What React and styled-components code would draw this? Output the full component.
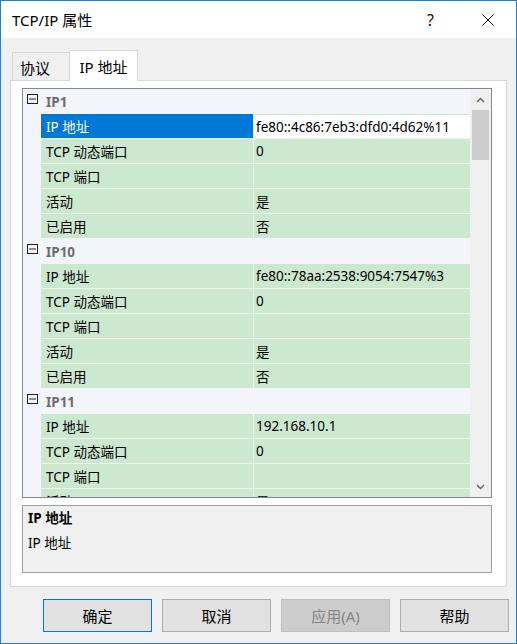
import React from "react";
import styled, { createGlobalStyle } from "styled-components";

const GlobalStyle = createGlobalStyle`
  html, body {
    margin: 0;
    padding: 0;
    background: #ffffff;
  }
  body {
    font-family: "Noto Sans", "Noto Sans CJK SC", sans-serif;
  }
  * {
    box-sizing: border-box;
  }
`;

// window frame
const Window = styled.div`
  width: 517px;
  height: 644px;
  border: 1px solid #1883d7;
  background: #f0f0f0;
  display: flex;
  flex-direction: column;
`;

const TitleBar = styled.div`
  height: 37px;
  background: #ffffff;
  display: flex;
  align-items: center;
  padding-left: 11px;
  font-size: 15px;
  color: #000;
`;

const Title = styled.div`
  flex: 1;
`;

const TitleButton = styled.div`
  width: 57px;
  height: 37px;
  display: flex;
  align-items: center;
  justify-content: center;
  font-size: 16px;
  color: #111;
`;

const TabStrip = styled.div`
  margin-top: 11px;
  height: 31px;
  display: flex;
  align-items: flex-end;
  padding-left: 11px;
`;

const Tab = styled.div`
  height: ${({ active }) => (active ? "31px" : "28px")};
  width: ${({ active }) => (active ? "68px" : "58px")};
  background: ${({ active }) => (active ? "#ffffff" : "#f0f0f0")};
  border: 1px solid #d9d9d9;
  border-bottom: none;
  border-left: ${({ active }) => (active ? "none" : "1px solid #d9d9d9")};
  margin-bottom: ${({ active }) => (active ? "-1px" : "0")};
  position: relative;
  z-index: ${({ active }) => (active ? 2 : 1)};
  display: flex;
  align-items: center;
  justify-content: ${({ active }) => (active ? "center" : "flex-start")};
  padding-left: ${({ active }) => (active ? "0" : "7px")};
  padding-top: ${({ active }) => (active ? "0" : "2px")};
  font-size: 15px;
  color: #000;
`;

const Panel = styled.div`
  margin-left: 9px;
  width: 497px;
  height: 507px;
  background: #ffffff;
  border: 1px solid #d9d9d9;
  padding: 7px 0 0 11px;
  display: flex;
  flex-direction: column;
`;

// property grid
const Grid = styled.div`
  width: 470px;
  height: 410px;
  border: 1px solid #828790;
  display: flex;
  overflow: hidden;
`;

const RowList = styled.div`
  flex: 1;
  overflow: hidden;
  font-size: 13.5px;
`;

const CategoryRow = styled.div`
  height: 25px;
  background: #f4f5fa;
  display: flex;
  align-items: center;
`;

const Gutter = styled.div`
  width: 18px;
  height: 100%;
  flex-shrink: 0;
  background: #f4f5fa;
  display: flex;
  align-items: flex-start;
  justify-content: center;
  padding-top: ${({ icon }) => (icon ? "5px" : "0")};
`;

const CategoryName = styled.div`
  padding-left: 5px;
  font-weight: bold;
  color: #6d6d6d;
  font-size: 13.5px;
`;

const PropRow = styled.div`
  height: 25px;
  display: flex;
`;

const NameCell = styled.div`
  width: 213px;
  flex-shrink: 0;
  background: ${({ selected }) => (selected ? "#0078d7" : "#cce8cf")};
  color: ${({ selected }) => (selected ? "#ffffff" : "#000")};
  border-right: 1px solid #eef7ef;
  border-bottom: 1px solid #eef7ef;
  padding-left: 5px;
  display: flex;
  align-items: center;
`;

const ValueCell = styled.div`
  flex: 1;
  background: ${({ selected }) => (selected ? "#ffffff" : "#cce8cf")};
  border-top: ${({ selected }) => (selected ? "1px solid #cce8cf" : "none")};
  border-bottom: 1px solid #eef7ef;
  padding-left: 2px;
  display: flex;
  align-items: center;
  color: #000;
  white-space: nowrap;
`;

const ScrollBar = styled.div`
  width: 21px;
  flex-shrink: 0;
  background: #f0f0f0;
  display: flex;
  flex-direction: column;
  align-items: center;
`;

const ArrowBox = styled.div`
  height: 21px;
  width: 100%;
  display: flex;
  align-items: center;
  justify-content: center;
`;

const Thumb = styled.div`
  width: 17px;
  height: 50px;
  background: #cdcdcd;
`;

const Track = styled.div`
  flex: 1;
`;

const Description = styled.div`
  margin-top: 7px;
  width: 470px;
  height: 68px;
  background: #f0f0f0;
  border: 1px solid #a0a0a0;
  padding: 0 5px;
  font-size: 13.5px;
  color: #000;
`;

const DescTitle = styled.div`
  font-weight: bold;
  line-height: 25px;
`;

const DescText = styled.div`
  line-height: 25px;
`;

const ButtonRow = styled.div`
  margin-top: 12px;
  display: flex;
  justify-content: flex-end;
  gap: 10px;
  padding-right: 7px;
`;

const Button = styled.div`
  width: 109px;
  height: 33px;
  display: flex;
  align-items: center;
  justify-content: center;
  font-size: 15px;
  background: ${({ disabled }) => (disabled ? "#cccccc" : "#e1e1e1")};
  color: ${({ disabled }) => (disabled ? "#838383" : "#000")};
  border: 1px solid
    ${({ primary, disabled }) =>
      primary ? "#0078d7" : disabled ? "#bfbfbf" : "#adadad"};
`;

const CollapseIcon = () => (
  <svg width="11" height="10" viewBox="0 0 11 10">
    <rect x="0.5" y="0.5" width="10" height="9" fill="none" stroke="#222" />
    <line x1="2" y1="5" x2="9" y2="5" stroke="#222" />
  </svg>
);

const Chevron = ({ down }) => (
  <svg width="9" height="6" viewBox="0 0 9 6">
    <polyline
      points={down ? "1,1 4.5,4.5 8,1" : "1,5 4.5,1.5 8,5"}
      fill="none"
      stroke="#606060"
      strokeWidth="1.3"
    />
  </svg>
);

const groups = [
  {
    name: "IP1",
    props: [
      ["IP 地址", "fe80::4c86:7eb3:dfd0:4d62%11", true],
      ["TCP 动态端口", "0"],
      ["TCP 端口", ""],
      ["活动", "是"],
      ["已启用", "否"],
    ],
  },
  {
    name: "IP10",
    props: [
      ["IP 地址", "fe80::78aa:2538:9054:7547%3"],
      ["TCP 动态端口", "0"],
      ["TCP 端口", ""],
      ["活动", "是"],
      ["已启用", "否"],
    ],
  },
  {
    name: "IP11",
    props: [
      ["IP 地址", "192.168.10.1"],
      ["TCP 动态端口", "0"],
      ["TCP 端口", ""],
      ["活动", "是"],
      ["已启用", "否"],
    ],
  },
];

const App = () => {
  return (
    <>
      <GlobalStyle />
      <Window>
        <TitleBar>
          <Title>TCP/IP 属性</Title>
          <TitleButton>?</TitleButton>
          <TitleButton>
            <svg width="12" height="12" viewBox="0 0 12 12">
              <path d="M0.5 0.5 L11.5 11.5 M11.5 0.5 L0.5 11.5" stroke="#111" strokeWidth="1" />
            </svg>
          </TitleButton>
        </TitleBar>

        <TabStrip>
          <Tab>协议</Tab>
          <Tab active>IP 地址</Tab>
        </TabStrip>

        <Panel>
          <Grid>
            <RowList>
              {groups.map((g) => (
                <React.Fragment key={g.name}>
                  <CategoryRow>
                    <Gutter icon>
                      <CollapseIcon />
                    </Gutter>
                    <CategoryName>{g.name}</CategoryName>
                  </CategoryRow>
                  {g.props.map(([name, value, selected], i) => (
                    <PropRow key={i}>
                      <Gutter />
                      <NameCell selected={selected}>{name}</NameCell>
                      <ValueCell selected={selected}>{value}</ValueCell>
                    </PropRow>
                  ))}
                </React.Fragment>
              ))}
            </RowList>
            <ScrollBar>
              <ArrowBox>
                <Chevron />
              </ArrowBox>
              <Thumb />
              <Track />
              <ArrowBox>
                <Chevron down />
              </ArrowBox>
            </ScrollBar>
          </Grid>

          <Description>
            <DescTitle>IP 地址</DescTitle>
            <DescText>IP 地址</DescText>
          </Description>
        </Panel>

        <ButtonRow>
          <Button primary>确定</Button>
          <Button>取消</Button>
          <Button disabled>应用(A)</Button>
          <Button>帮助</Button>
        </ButtonRow>
      </Window>
    </>
  );
};

export default App;
